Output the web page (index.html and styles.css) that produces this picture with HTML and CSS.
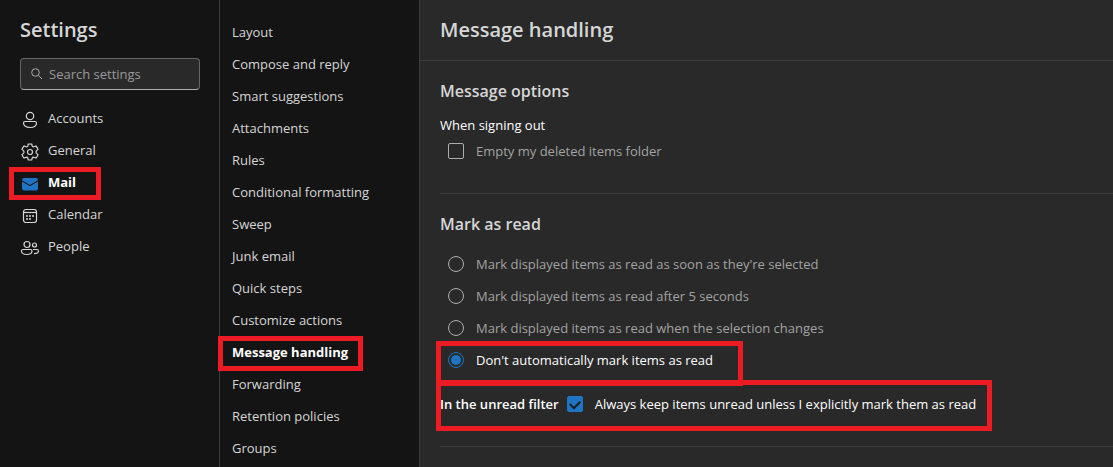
FILE: index.html
```html
<!DOCTYPE html>
<html lang="en">
<head>
    <meta charset="UTF-8">
    <meta name="viewport" content="width=device-width, initial-scale=1.0">
    <title>Settings - Message handling</title>
    <link rel="stylesheet" href="styles.css">
</head>
<body>
    <div class="settings">
        <aside class="sidebar">
            <h1 class="pane-title">Settings</h1>
            <div class="search">
                <svg class="search-icon" viewBox="0 0 12 12" aria-hidden="true">
                    <circle cx="4.5" cy="4.5" r="3.8"/>
                    <path d="M7.300 7.300l3.700 3.700"/>
                </svg>
                <input type="search" placeholder="Search settings" aria-label="Search settings">
            </div>
            <nav class="categories">
                <a href="#accounts" class="category">
                    <svg class="icon" viewBox="0 0 20 20" aria-hidden="true">
                        <circle cx="10" cy="6" r="3.7"/>
                        <path d="M5 11.500h10a1.500 1.500 0 0 1 1.500 1.500c0 2.800-2.600 4.500-6.500 4.500S3.500 15.800 3.500 13A1.500 1.500 0 0 1 5 11.500z"/>
                    </svg>
                    Accounts
                </a>
                <a href="#general" class="category">
                    <svg class="icon" viewBox="0 0 20 20" aria-hidden="true">
                        <path d="M8.2 2.2Q10 1.800 11.800 2.200L12.200 4Q12.600 5 13.700 4.700L15.900 4Q17.400 5.500 18 7.400L16.400 8.900Q15.400 10 16.400 11.100L18 12.600Q17.400 14.500 15.900 16L13.700 15.300Q12.600 15 12.200 16L11.800 17.800Q10 18.200 8.200 17.800L7.800 16Q7.400 15 6.300 15.300L4.100 16Q2.600 14.500 2 12.600L3.600 11.100Q4.600 10 3.600 8.900L2 7.400Q2.600 5.500 4.100 4L6.300 4.700Q7.400 5 7.800 4z"/>
                        <circle cx="10" cy="10" r="2.500"/>
                    </svg>
                    General
                </a>
                <a href="#mail" class="category selected marked marked-mail">
                    <svg class="icon icon-filled" viewBox="0 0 20 20" aria-hidden="true">
                        <path d="M18 7.400v7.100a2 2 0 0 1-2 2H4a2 2 0 0 1-2-2V7.400l7.750 4.500a.5.5 0 0 0 .5 0zM4 4h12a2 2 0 0 1 2 2.200l-8 4.700-8-4.700A2 2 0 0 1 4 4z"/>
                    </svg>
                    Mail
                </a>
                <a href="#calendar" class="category">
                    <svg class="icon" viewBox="0 0 20 20" aria-hidden="true">
                        <rect x="3.500" y="3.500" width="13" height="13" rx="2.500"/>
                        <path d="M3.500 6.500h13"/>
                        <path class="dots" d="M7 10h0M10 10h0M13 10h0M7 13h0M10 13h0"/>
                    </svg>
                    Calendar
                </a>
                <a href="#people" class="category">
                    <svg class="icon" viewBox="0 0 20 20" aria-hidden="true">
                        <circle cx="7" cy="6.500" r="3"/>
                        <circle cx="14.500" cy="7" r="2"/>
                        <path d="M3 11.500h7.500A1.500 1.500 0 0 1 12 13c0 2.300-2 3.500-5.200 3.500S1.500 15.300 1.500 13A1.500 1.500 0 0 1 3 11.500z"/>
                        <path d="M13 11.500h4a1.500 1.500 0 0 1 1.500 1.500c0 1.700-1.800 2.700-4.500 2.500"/>
                    </svg>
                    People
                </a>
            </nav>
        </aside>

        <nav class="subnav">
            <a href="#layout">Layout</a>
            <a href="#compose">Compose and reply</a>
            <a href="#suggestions">Smart suggestions</a>
            <a href="#attachments">Attachments</a>
            <a href="#rules">Rules</a>
            <a href="#formatting">Conditional formatting</a>
            <a href="#sweep">Sweep</a>
            <a href="#junk">Junk email</a>
            <a href="#quick-steps">Quick steps</a>
            <a href="#actions">Customize actions</a>
            <a href="#handling" class="selected marked marked-handling">Message handling</a>
            <a href="#forwarding">Forwarding</a>
            <a href="#retention">Retention policies</a>
            <a href="#groups">Groups</a>
        </nav>

        <main class="content">
            <header class="content-header">
                <h2 class="pane-title">Message handling</h2>
            </header>

            <section class="section">
                <h3>Message options</h3>
                <p class="section-label">When signing out</p>
                <label class="option">
                    <input type="checkbox">
                    Empty my deleted items folder
                </label>
            </section>

            <section class="section">
                <h3>Mark as read</h3>
                <label class="option">
                    <input type="radio" name="mark-read">
                    Mark displayed items as read as soon as they're selected
                </label>
                <label class="option">
                    <input type="radio" name="mark-read">
                    Mark displayed items as read after 5 seconds
                </label>
                <label class="option">
                    <input type="radio" name="mark-read">
                    Mark displayed items as read when the selection changes
                </label>
                <label class="option active marked marked-radio">
                    <input type="radio" name="mark-read" checked>
                    Don't automatically mark items as read
                </label>
                <div class="filter marked marked-filter">
                    <strong>In the unread filter</strong>
                    <label class="option active">
                        <input type="checkbox" checked>
                        Always keep items unread unless I explicitly mark them as read
                    </label>
                </div>
            </section>
        </main>
    </div>
</body>
</html>
```

FILE: styles.css
```css
* {
    box-sizing: border-box;
}
body {
    margin: 0;
    background: #292929;
    color: #d6d6d6;
    font-family: "Open Sans", "Noto Sans", sans-serif;
    font-size: 13px;
    line-height: 20px;
}
h1, h2, h3, p {
    margin: 0;
}
a {
    color: inherit;
    text-decoration: none;
}
.settings {
    display: grid;
    grid-template-columns: 220px 200px 1fr;
    min-height: 100vh;
}
.pane-title {
    font-size: 20px;
    font-weight: 600;
    line-height: 28px;
}

/* Left pane */
.sidebar {
    background: #141414;
    border-right: 1px solid #3d3d3d;
    padding: 16px 19px 0 20px;
}
.search {
    display: flex;
    align-items: center;
    gap: 6px;
    height: 32px;
    margin: 14px 0 12px;
    padding: 0 10px;
    background: #292929;
    border: 1px solid #666;
    border-bottom-color: #adadad;
    border-radius: 4px;
}
.search-icon {
    flex: none;
    width: 12px;
    height: 12px;
    fill: none;
    stroke: #adadad;
}
.search input {
    flex: 1;
    min-width: 0;
    padding: 0;
    background: none;
    border: none;
    outline: none;
    color: #fff;
    font: inherit;
    appearance: none;
}
.search input::placeholder {
    color: #999;
    opacity: 1;
}
.categories {
    display: flex;
    flex-direction: column;
    align-items: flex-start;
}
.category {
    display: flex;
    align-items: center;
    gap: 8px;
    height: 32px;
}
.icon {
    width: 20px;
    height: 20px;
    margin-top: 4px;
    fill: none;
    stroke: currentColor;
    stroke-width: 1.2;
}
.icon-filled {
    fill: #1f75c4;
    stroke: none;
}
.dots {
    stroke-width: 2;
    stroke-linecap: round;
}
.selected {
    color: #fff;
    font-weight: 700;
}

/* Mail sub pages */
.subnav {
    background: #141414;
    border-right: 1px solid #3d3d3d;
    padding: 16px 12px 0;
}
.subnav a {
    display: block;
    line-height: 32px;
}

/* Content */
.content-header {
    padding: 16px 20px;
    border-bottom: 1px solid #3d3d3d;
}
.section {
    display: flex;
    flex-direction: column;
    align-items: flex-start;
    margin-left: 20px;
    padding: 20px 0 26px;
    border-bottom: 1px solid #3d3d3d;
}
.section h3 {
    margin-bottom: 14px;
    font-size: 16px;
    font-weight: 600;
}
.section-label {
    color: #fff;
}
.option {
    display: flex;
    align-items: center;
    gap: 12px;
    min-height: 32px;
    padding-left: 8px;
    color: #a3a3a3;
}
.option.active {
    color: #fff;
}
.option input {
    flex: none;
    display: grid;
    place-content: center;
    width: 16px;
    height: 16px;
    margin: 0;
    border: 1px solid #adadad;
    border-radius: 2px;
    appearance: none;
}
.option input[type="radio"] {
    border-radius: 50%;
}
.option input[type="radio"]:checked {
    border-color: #1f75c4;
}
.option input[type="radio"]:checked::before {
    content: "";
    width: 10px;
    height: 10px;
    border-radius: 50%;
    background: #1f75c4;
}
.option input[type="checkbox"]:checked {
    background: #1f75c4;
    border-color: #1f75c4;
}
.option input[type="checkbox"]:checked::before {
    content: "";
    width: 8px;
    height: 5px;
    margin-bottom: 2px;
    border: solid #1c1c1c;
    border-width: 0 0 2px 2px;
    transform: rotate(-45deg);
}
.filter {
    display: flex;
    align-items: center;
    margin-top: 12px;
    color: #fff;
}
.filter strong {
    font-weight: 600;
}

/* Red highlight frames */
.marked {
    position: relative;
}
.marked::after {
    content: "";
    position: absolute;
    border: 5px solid #ed1c24;
    pointer-events: none;
}
.marked-mail::after {
    inset: 1px -25px -2px -11px;
}
.marked-handling::after {
    inset: 0 44px -3px -14px;
}
.marked-radio::after {
    inset: -3px -30px -10px -4px;
}
.marked-filter::after {
    inset: -8px -16px -11px -4px;
}
```
